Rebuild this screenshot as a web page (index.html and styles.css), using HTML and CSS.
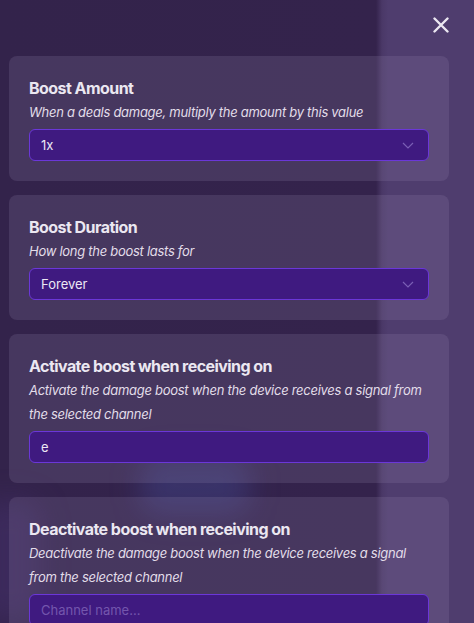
FILE: index.html
```html
<!DOCTYPE html>
<html>
<head>
<meta charset="utf-8">
<link rel="stylesheet" href="styles.css">
</head>
<body>
<div class="backdrop">
  <div class="blob blob-a"></div>
  <div class="blob blob-b"></div>
</div>
<div class="panel">
  <div class="header">
    <button class="close" aria-label="Close">
      <svg width="16" height="16" viewBox="0 0 16 16"><path d="M1.5 1.5 L14.5 14.5 M14.5 1.5 L1.5 14.5" stroke="#ebe7f1" stroke-width="2.4" stroke-linecap="round" fill="none"/></svg>
    </button>
  </div>
  <div class="cards">
    <section class="card">
      <h2 class="title">Boost Amount</h2>
      <p class="desc">When a deals damage, multiply the amount by this value</p>
      <div class="field select">
        <span class="value">1x</span>
        <svg class="chev" width="12" height="7" viewBox="0 0 12 7"><path d="M1 1 L6 6 L11 1" stroke="#7a5fb4" stroke-width="1.2" fill="none"/></svg>
      </div>
    </section>
    <section class="card">
      <h2 class="title">Boost Duration</h2>
      <p class="desc">How long the boost lasts for</p>
      <div class="field select">
        <span class="value">Forever</span>
        <svg class="chev" width="12" height="7" viewBox="0 0 12 7"><path d="M1 1 L6 6 L11 1" stroke="#7a5fb4" stroke-width="1.2" fill="none"/></svg>
      </div>
    </section>
    <section class="card">
      <h2 class="title">Activate boost when receiving on</h2>
      <p class="desc">Activate the damage boost when the device receives a signal from the selected channel</p>
      <div class="field">
        <span class="value">e</span>
      </div>
    </section>
    <section class="card">
      <h2 class="title">Deactivate boost when receiving on</h2>
      <p class="desc">Deactivate the damage boost when the device receives a signal from the selected channel</p>
      <div class="field">
        <span class="placeholder">Channel name...</span>
      </div>
    </section>
  </div>
</div>
</body>
</html>
```
FILE: styles.css
```css
* { box-sizing: border-box; }
html, body { margin: 0; padding: 0; }
body {
  width: 474px;
  height: 623px;
  overflow: hidden;
  font-family: Inter, "Noto Sans", sans-serif;
  background: linear-gradient(to right, #33234b 0px, #34234c 376px, #4a3867 382px, #4f3d6e 388px, #4f3d6e 100%);
  position: relative;
}
.backdrop {
  position: absolute;
  inset: 0;
  pointer-events: none;
}
.blob {
  position: absolute;
  filter: blur(14px);
  border-radius: 20px;
}
.blob-a {
  left: 140px; top: 455px; width: 110px; height: 60px;
  background: rgba(70, 80, 160, 0.35);
}
.blob-b {
  left: -20px; top: 500px; width: 60px; height: 123px;
  background: rgba(70, 50, 110, 0.5);
}
.panel {
  position: relative;
  padding: 0 25px 0 9px;
}
.header {
  height: 56px;
  display: flex;
  justify-content: flex-end;
  align-items: flex-start;
  padding-top: 17px;
  padding-right: 0;
}
.close {
  background: none;
  border: 0;
  padding: 0;
  width: 16px;
  height: 16px;
  display: block;
  cursor: pointer;
}
.close svg { display: block; }
.cards {
  display: flex;
  flex-direction: column;
  gap: 14px;
}
.card {
  background: rgba(150, 135, 175, 0.2);
  border-radius: 8px;
  padding: 20px;
}
.title {
  margin: 0;
  font-size: 16px;
  line-height: 24px;
  font-weight: 700;
  color: #ebe7f1;
  letter-spacing: -0.55px;
}
.desc {
  margin: 0 0 5px;
  font-size: 13px;
  line-height: 24px;
  font-style: italic;
  color: #e2dde9;
  letter-spacing: -0.28px;
}
.field {
  height: 32px;
  background: #3f1a80;
  border: 1px solid #6b37d8;
  border-radius: 6px;
  display: flex;
  align-items: center;
  justify-content: space-between;
  padding: 0 14px 0 11px;
  font-size: 13px;
}
.value { color: #ece8f4; }
.placeholder { color: #7456ad; }
.chev { display: block; }
```
